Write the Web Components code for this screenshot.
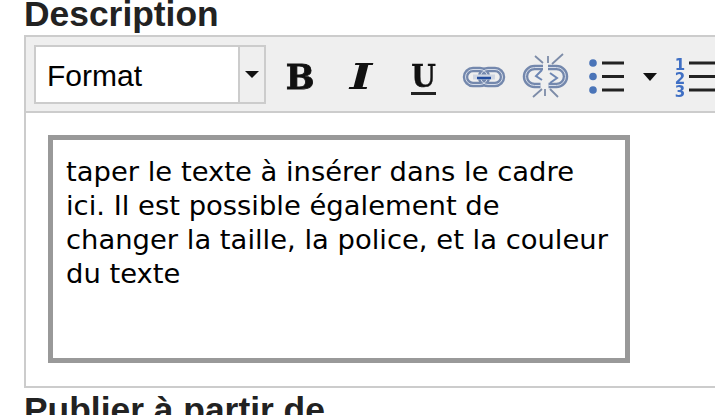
<!DOCTYPE html>
<html lang="fr">
<head>
<meta charset="utf-8">
<title>Description</title>
<style>
  html, body { margin: 0; height: 415px; overflow: hidden; background: #fff; }
  body { padding-left: 24px; width: 760px; font-family: "Liberation Sans", Arial, sans-serif; }
</style>
</head>
<body>
  <field-label style="--after:7px">Description</field-label>
  <rich-editor>
    <editor-toolbar slot="toolbar">
      <format-select>Format</format-select>
      <tool-icon name="bold" style="--gap:20px"></tool-icon>
      <tool-icon name="italic" style="--gap:34px"></tool-icon>
      <tool-icon name="underline" style="--gap:36px"></tool-icon>
      <tool-icon name="link" style="--gap:24px"></tool-icon>
      <tool-icon name="unlink" style="--gap:17px"></tool-icon>
      <tool-icon name="bullets" style="--gap:22px"></tool-icon>
      <tool-icon name="caret" style="--gap:18px"></tool-icon>
      <tool-icon name="numbers" style="--gap:18px"></tool-icon>
    </editor-toolbar>
    <text-frame>taper le texte à insérer dans le cadre ici. Il est possible également de changer la taille, la police, et la couleur du texte</text-frame>
  </rich-editor>
  <field-label style="--top:8px">Publier à partir de</field-label>

<script>
// ==== heading above each field ==== //
class FieldLabel extends HTMLElement {
  constructor() {
    super();
    this.attachShadow({ mode: 'open' });
    this.shadowRoot.innerHTML = `
      <style>
        :host {
          display: block;
          margin-top: var(--top, 0);
          margin-bottom: var(--after, 0);
          font: bold 35.4px/28px "Liberation Sans", Arial, sans-serif;
          color: #222;
          white-space: nowrap;
        }
      </style>
      <slot></slot>
    `;
  }
}

// ==== editor box ==== //
class RichEditor extends HTMLElement {
  constructor() {
    super();
    this.attachShadow({ mode: 'open' });
    this.shadowRoot.innerHTML = `
      <style>
        :host {
          display: block;
          width: 736px;
          border: 2px solid #ccc;
          background: #fff;
        }
        .body { padding: 22px 0 23px 22px; }
      </style>
      <slot name="toolbar"></slot>
      <div class="body"><slot></slot></div>
    `;
  }
}

class EditorToolbar extends HTMLElement {
  constructor() {
    super();
    this.attachShadow({ mode: 'open' });
    this.shadowRoot.innerHTML = `
      <style>
        :host {
          display: flex;
          align-items: center;
          height: 74px;
          padding-left: 8px;
          background: #efefef;
          border-bottom: 2px solid #ccc;
        }
      </style>
      <slot></slot>
    `;
  }
}

class FormatSelect extends HTMLElement {
  constructor() {
    super();
    this.attachShadow({ mode: 'open' });
    this.shadowRoot.innerHTML = `
      <style>
        :host {
          display: flex;
          flex: none;
          box-sizing: border-box;
          width: 232px;
          height: 59px;
          margin-top: 1px;
          border: 2px solid #ccc;
          font: 30px "Liberation Sans", Arial, sans-serif;
          color: #000;
        }
        .value {
          flex: 1;
          display: flex;
          align-items: center;
          padding: 3px 0 0 11px;
          background: #fff;
        }
        .arrow {
          width: 24px;
          display: flex;
          align-items: center;
          justify-content: center;
          border-left: 2px solid #ccc;
        }
        .arrow i {
          border: 7px solid transparent;
          border-top-color: #111;
          border-bottom-width: 0;
        }
      </style>
      <div class="value"><slot></slot></div>
      <div class="arrow"><i></i></div>
    `;
  }
}

// every icon box is 44px high, so y in the drawings is page y minus 52
const ICONS = {
  bold: { w: 28, svg: `<text transform="translate(14 37)" text-anchor="middle" font-family="DejaVu Serif" font-weight="bold" font-size="34" fill="#111" stroke="#111" stroke-width=".8">B</text>` },
  italic: { w: 26, svg: `<text transform="translate(13 37) scale(1.45 1.05)" text-anchor="middle" font-family="DejaVu Serif" font-weight="bold" font-style="italic" font-size="33" fill="#111">I</text>` },
  underline: { w: 28, svg: `<text transform="translate(13.500 35) scale(.88 1)" text-anchor="middle" font-family="DejaVu Serif" font-weight="bold" font-size="32" fill="#111" stroke="#111" stroke-width=".5">U</text><rect x="1" y="40" width="25" height="3" fill="#222"/>` },
  link: { w: 44, svg: `
    <g fill="none">
      <rect x="3.500" y="17.500" width="22" height="15" rx="7.500" stroke="#7488ad" stroke-width="5.500"/>
      <rect x="18.500" y="17.500" width="22" height="15" rx="7.500" stroke="#7488ad" stroke-width="5.500"/>
      <rect x="3.500" y="17.500" width="22" height="15" rx="7.500" stroke="#d5dce9" stroke-width="1"/>
      <rect x="18.500" y="17.500" width="22" height="15" rx="7.500" stroke="#d5dce9" stroke-width="1"/>
      <path d="M11 25h22" stroke="#cfd6e3" stroke-width="5"/>
      <path d="M15 26h14" stroke="#234d9e" stroke-width="2.500"/>
    </g>` },
  unlink: { w: 44, svg: `
    <g fill="none">
      <path d="M20 15.500h-8.500a9 9 0 0 0 0 18h6" stroke="#7488ad" stroke-width="5.500"/>
      <path d="M25 15.500h8.500a9 9 0 0 1 0 18h-8" stroke="#7488ad" stroke-width="5.500"/>
      <path d="M20 15.500h-8.500a9 9 0 0 0 0 18h6M25 15.500h8.500a9 9 0 0 1 0 18h-8" stroke="#d5dce9" stroke-width="1"/>
      <path d="M19 18l-6 6 6 4M27 21l7 5-7 5" stroke="#6d86b3" stroke-width="2"/>
      <path d="M12 4l8 7M25 4v7M40 2L29 12M10 45l9-8M22 44v-7M35 45l-8-8" stroke="#7d8ca8" stroke-width="1.800"/>
    </g>` },
  bullets: { w: 36, svg: `
    <g fill="#4a74b8"><circle cx="4" cy="11" r="3.800"/><circle cx="4" cy="24.500" r="3.800"/><circle cx="4" cy="38" r="3.800"/></g>
    <g stroke="#222" stroke-width="3"><path d="M13 11h22M13 24.500h22M13 38h22"/></g>` },
  caret: { w: 14, svg: `<path d="M0 21h14l-7 8z" fill="#111"/>` },
  numbers: { w: 42, svg: `
    <g font-family="DejaVu Sans" font-weight="bold" font-size="15" fill="#3f6fc4" text-anchor="middle">
      <text x="5" y="17.500">1</text><text x="5" y="31.500">2</text><text x="5" y="45">3</text>
    </g>
    <g stroke="#222" stroke-width="3"><path d="M14 11h28M14 24.500h28M14 38h28"/></g>` },
};

class ToolIcon extends HTMLElement {
  constructor() {
    super();
    this.attachShadow({ mode: 'open' });
  }

  connectedCallback() {
    const icon = ICONS[this.getAttribute('name')];
    this.shadowRoot.innerHTML = `
      <style>
        :host { display: block; flex: none; margin-left: var(--gap, 0); line-height: 0; }
        svg { overflow: visible; filter: blur(.6px); }
      </style>
      <svg width="${icon.w}" height="44" viewBox="0 0 ${icon.w} 44">${icon.svg}</svg>
    `;
  }
}

// ==== framed text inside the editor ==== //
class TextFrame extends HTMLElement {
  constructor() {
    super();
    this.attachShadow({ mode: 'open' });
    this.shadowRoot.innerHTML = `
      <style>
        :host {
          display: block;
          box-sizing: border-box;
          width: 582px;
          height: 228px;
          padding: 15px 13px;
          border: 5px solid #999;
          font: 27.4px/34px "DejaVu Sans", Verdana, sans-serif;
          color: #000;
        }
      </style>
      <slot></slot>
    `;
  }
}

customElements.define('field-label', FieldLabel);
customElements.define('rich-editor', RichEditor);
customElements.define('editor-toolbar', EditorToolbar);
customElements.define('format-select', FormatSelect);
customElements.define('tool-icon', ToolIcon);
customElements.define('text-frame', TextFrame);
</script>
</body>
</html>
